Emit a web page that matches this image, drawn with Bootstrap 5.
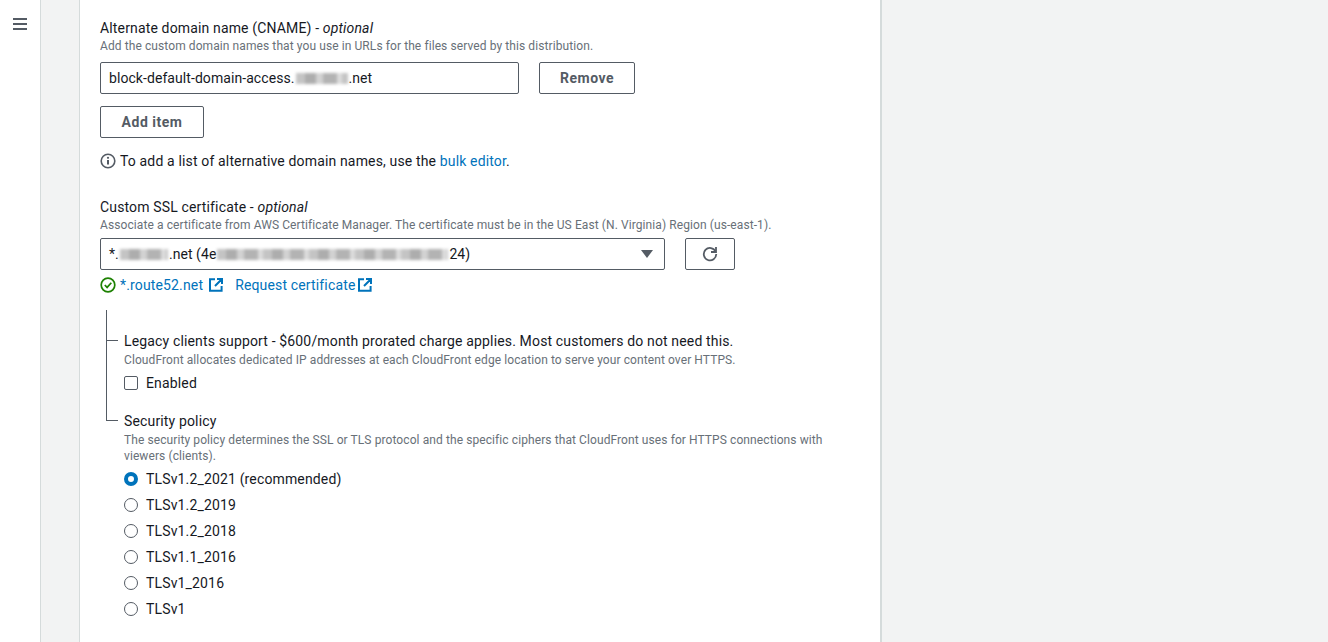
<!DOCTYPE html>
<html lang="en"><head><meta charset="utf-8"><title>Settings</title>
<link href="https://cdn.jsdelivr.net/npm/bootstrap@5.3.0/dist/css/bootstrap.min.css" rel="stylesheet">
<style>
html,body{height:642px;overflow:hidden}
body{font-family:Roboto,"Liberation Sans",sans-serif;font-size:14px;line-height:20px;letter-spacing:.15px;color:#16191f;background:#f2f3f3}
.shell{height:642px}
.rail{width:41px;background:#fff;border-right:1px solid #d5dbdb;padding:13px 0 0 13px}
.gutter{width:38px}
.panel{width:803px;background:#fff;border-left:1px solid #d5dbdb;border-right:2px solid #d5dbdb;padding:18px 20px 0 20px}
.lab{height:20px}
.hint{font-size:12px;line-height:16px;letter-spacing:.09px;color:#687078;margin-bottom:8px}
.hint-tight{margin-bottom:5px}
.hint-sub{margin-top:1px;margin-bottom:2px}
.hint-pol{margin-top:1px;margin-bottom:2px;width:710px}
.fld{height:32px;border:1px solid #545b64;border-radius:2px;padding:0 8px;display:flex;align-items:center;background:#fff;letter-spacing:.07px}
.w-name{width:419px}.w-cert{width:565px}
.awsbtn{height:32px;border:1px solid #545b64;border-radius:2px;background:#fff;color:#545b64;font-weight:700;display:flex;align-items:center;justify-content:center;letter-spacing:.5px}
.b-remove{width:96px;margin-left:20px}.b-add{width:104px;margin-top:12px}.b-refresh{width:50px;margin-left:20px}
.note{margin-top:13px;height:20px;margin-bottom:26px}
a.lnk{color:#0073bb;text-decoration:none}
.smudge{display:inline-block;height:11px;filter:blur(1.8px);background:repeating-linear-gradient(90deg,#c4c4c4 0 9px,#adadad 9px 20px,#d2d2d2 20px 27px,#b3b3b3 27px 41px,#dcdcdc 41px 46px)}
.s-name{width:52px;margin:0 1px}.s-host{width:48px;margin:0 1px}.s-id{width:231px;margin:0 1px}
.caret{margin-right:3px}
.links{margin-top:5px;height:20px}
.ext{margin-left:6px}
.ext-near{margin-left:3px}
.tree{margin-left:6px;margin-top:15px;height:111px;width:12px;flex:none;border-left:1px solid #545b64;position:relative}
.tree::before,.tree::after{content:"";position:absolute;left:0;width:11px;border-top:1px solid #545b64}
.tree::before{top:30px}.tree::after{bottom:0}
.sub{padding-left:6px;padding-top:36px}
.chk{width:14px;height:14px;border:1px solid #545b64;border-radius:2px;flex:none}
.rad{width:14px;height:14px;border:1px solid #545b64;border-radius:50%;flex:none}
.rad.on{border:4px solid #0073bb}
.opt{height:26px;gap:8px}
.gap-sec{margin-top:15px}
</style></head><body>
<div class="d-flex shell">
<div class="rail"><svg width="14" height="12" viewBox="0 0 14 12"><path d="M0 1h14M0 6h14M0 11h14" stroke="#545b64" stroke-width="2"/></svg></div>
<div class="gutter"></div>
<div class="panel">
 <div class="lab">Alternate domain name (CNAME) - <i>optional</i></div>
 <div class="hint">Add the custom domain names that you use in URLs for the files served by this distribution.</div>
 <div class="d-flex">
  <div class="fld w-name">block-default-domain-access.<span class="smudge s-name"></span>.net</div>
  <div class="awsbtn b-remove">Remove</div>
 </div>
 <div class="awsbtn b-add">Add item</div>
 <div class="note d-flex align-items-center gap-1">
  <svg width="16" height="16" viewBox="0 0 16 16" fill="none"><circle cx="8" cy="8" r="6.8" stroke="#545b64" stroke-width="1.6"/><path d="M8 7v4.5" stroke="#545b64" stroke-width="2"/><circle cx="8" cy="4.8" r="1.1" fill="#545b64"/></svg>
  <span>To add a list of alternative domain names, use the <a class="lnk" href="#">bulk editor</a>.</span>
 </div>
 <div class="lab">Custom SSL certificate - <i>optional</i></div>
 <div class="hint hint-tight">Associate a certificate from AWS Certificate Manager. The certificate must be in the US East (N. Virginia) Region (us-east-1).</div>
 <div class="d-flex">
  <div class="fld w-cert"><span>*.</span><span class="smudge s-host"></span><span>.net (4e</span><span class="smudge s-id"></span><span>24)</span>
   <svg class="ms-auto caret" width="12" height="10" viewBox="0 0 12 10"><path d="M0 1h12L6 9z" fill="#545b64"/></svg></div>
  <div class="awsbtn b-refresh"><svg width="16" height="16" viewBox="0 0 16 16" fill="none"><path d="M13.6 5.5A6.2 6.2 0 1 0 14.2 8" stroke="#545b64" stroke-width="1.8"/><path d="M14 1v5H9" stroke="#545b64" stroke-width="1.8"/></svg></div>
 </div>
 <div class="links d-flex align-items-center">
  <svg class="me-1" width="16" height="16" viewBox="0 0 16 16" fill="none"><circle cx="8" cy="8" r="6.8" stroke="#1d8102" stroke-width="1.7"/><path d="M4.8 8l2.3 2.4 4.2-4.6" stroke="#1d8102" stroke-width="1.7"/></svg>
  <a class="lnk" href="#">*.route52.net</a>
  <svg class="ext" width="14" height="14" viewBox="0 0 14 14" fill="none"><path d="M6 1.2H1v11.6h11.6V8M8 1h5v5M13 1L6 8" stroke="#0073bb" stroke-width="2"/></svg>
  <a class="lnk ms-2 ps-1" href="#">Request certificate</a>
  <svg class="ext-near" width="14" height="14" viewBox="0 0 14 14" fill="none"><path d="M6 1.2H1v11.6h11.6V8M8 1h5v5M13 1L6 8" stroke="#0073bb" stroke-width="2"/></svg>
 </div>
 <div class="d-flex">
  <div class="tree"></div>
  <div class="sub">
   <div class="lab">Legacy clients support - $600/month prorated charge applies. Most customers do not need this.</div>
   <div class="hint hint-sub">CloudFront allocates dedicated IP addresses at each CloudFront edge location to serve your content over HTTPS.</div>
   <div class="d-flex align-items-center opt"><span class="chk"></span><span>Enabled</span></div>
   <div class="lab gap-sec">Security policy</div>
   <div class="hint hint-pol">The security policy determines the SSL or TLS protocol and the specific ciphers that CloudFront uses for HTTPS connections with viewers (clients).</div>
   <div class="d-flex align-items-center opt"><span class="rad on"></span><span>TLSv1.2_2021 (recommended)</span></div>
   <div class="d-flex align-items-center opt"><span class="rad"></span><span>TLSv1.2_2019</span></div>
   <div class="d-flex align-items-center opt"><span class="rad"></span><span>TLSv1.2_2018</span></div>
   <div class="d-flex align-items-center opt"><span class="rad"></span><span>TLSv1.1_2016</span></div>
   <div class="d-flex align-items-center opt"><span class="rad"></span><span>TLSv1_2016</span></div>
   <div class="d-flex align-items-center opt"><span class="rad"></span><span>TLSv1</span></div>
  </div>
 </div>
</div>
</div>
<script src="https://cdn.jsdelivr.net/npm/bootstrap@5.3.0/dist/js/bootstrap.bundle.min.js"></script>
</body></html>
